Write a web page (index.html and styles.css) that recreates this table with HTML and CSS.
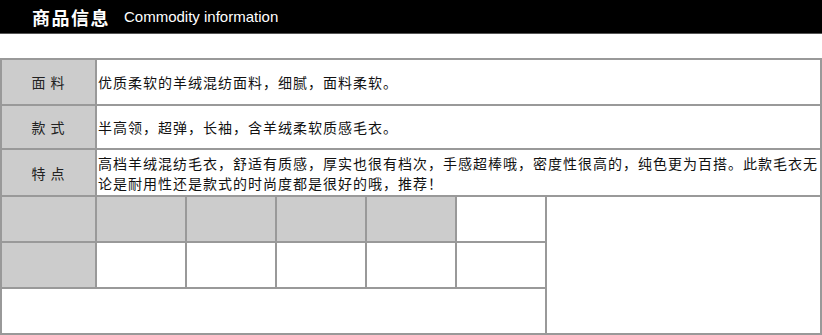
FILE: index.html
```html
<!DOCTYPE html>
<html lang="zh-CN">
<head>
<meta charset="utf-8">
<title>商品信息</title>
<link rel="stylesheet" href="styles.css">
</head>
<body>
<div class="header">
  <span class="title-cn">商品信息</span>
  <span class="title-en">Commodity information</span>
</div>
<div class="spacer"></div>
<div class="grid">
  <div class="cell label r1">面 料</div>
  <div class="cell text span6">优质柔软的羊绒混纺面料，细腻，面料柔软。</div>
  <div class="cell label r2">款 式</div>
  <div class="cell text span6">半高领，超弹，长袖，含羊绒柔软质感毛衣。</div>
  <div class="cell label r3">特 点</div>
  <div class="cell text span6">高档羊绒混纺毛衣，舒适有质感，厚实也很有档次，手感超棒哦，密度性很高的，纯色更为百搭。此款毛衣无论是耐用性还是款式的时尚度都是很好的哦，推荐！</div>

  <div class="cell grey"></div>
  <div class="cell grey"></div>
  <div class="cell grey"></div>
  <div class="cell grey"></div>
  <div class="cell grey"></div>
  <div class="cell white"></div>
  <div class="cell white tall"></div>

  <div class="cell grey"></div>
  <div class="cell white"></div>
  <div class="cell white"></div>
  <div class="cell white"></div>
  <div class="cell white"></div>
  <div class="cell white"></div>

  <div class="cell white wide"></div>
</div>
</body>
</html>
```

FILE: styles.css
```css
html, body {
  margin: 0;
  padding: 0;
  background: #ffffff;
}
body {
  width: 822px;
  font-family: "Noto Sans CJK SC", "Liberation Sans", sans-serif;
  color: #111;
}
.header {
  height: 33px;
  background: #000;
  border-bottom: 1px solid #555;
  display: flex;
  align-items: center;
  padding-left: 32px;
  box-sizing: content-box;
}
.title-cn {
  font-family: "Noto Sans CJK SC", sans-serif;
  font-weight: 700;
  font-size: 18px;
  color: #fff;
  letter-spacing: 1.5px;
  line-height: 20px;
}
.title-en {
  font-family: "Liberation Sans", Arial, sans-serif;
  font-size: 15px;
  color: #fff;
  margin-left: 14px;
  line-height: 20px;
  padding-top: 1px;
}
.spacer {
  height: 24px;
}
.grid {
  display: grid;
  grid-template-columns: 93px 88px 88px 88px 88px 88px 273px;
  grid-template-rows: 44px 42px 45px 44px 44px 44px;
  gap: 2px;
  padding: 2px;
  background: #999999;
  width: 822px;
  box-sizing: border-box;
}
.cell {
  background: #fff;
}
.label {
  background: #cccccc;
  display: flex;
  align-items: center;
  justify-content: center;
  font-size: 14px;
  letter-spacing: 1px;
  color: #222;
}
.text {
  display: flex;
  align-items: center;
  padding-left: 1px;
  font-size: 14px;
  letter-spacing: 1px;
  line-height: 20px;
  color: #111;
}
.span6 {
  grid-column: 2 / 8;
}
.grey {
  background: #cccccc;
}
.white {
  background: #ffffff;
}
.tall {
  grid-column: 7;
  grid-row: 4 / 7;
}
.wide {
  grid-column: 1 / 7;
  grid-row: 6;
}
```
